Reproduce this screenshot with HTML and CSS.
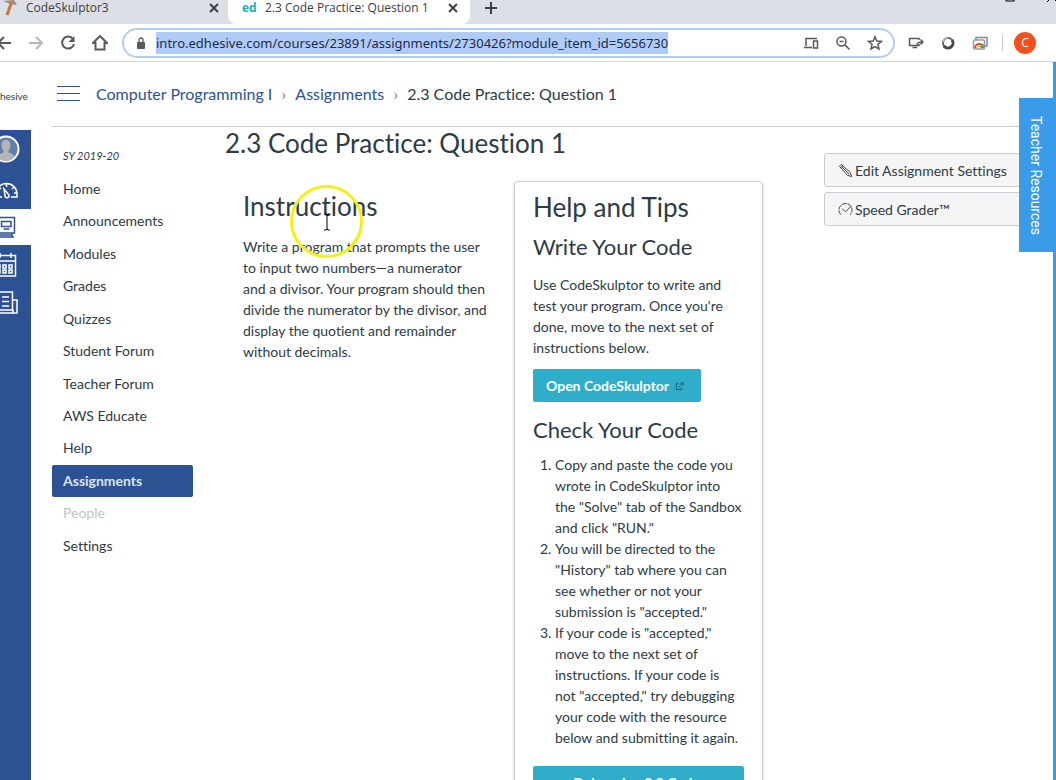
FILE: index.html
```html
<!DOCTYPE html>
<html lang="en">
<head>
    <meta charset="UTF-8">
    <meta name="viewport" content="width=device-width, initial-scale=1.0">
    <title>2.3 Code Practice: Question 1</title>
    <link rel="stylesheet" href="styles.css">
</head>
<body>
    <!-- Browser bar -->
    <div class="browser">
        <div class="tabs">
            <div class="tab">
                <svg class="favicon" viewBox="0 0 16 16"><path d="M8 4 L4 15" stroke="#c9713a" stroke-width="3"/><path d="M0 1 L11 0 L14 5 L7 4 Z" fill="#a08a7c" stroke="none"/></svg>
                <span class="tab-title">CodeSkulptor3</span>
                <button class="tab-button" aria-label="Close tab"><svg viewBox="0 0 10 10"><path d="M1 1 L9 9 M9 1 L1 9"/></svg></button>
            </div>
            <div class="tab active">
                <span class="favicon ed">ed</span>
                <span class="tab-title">2.3 Code Practice: Question 1</span>
                <button class="tab-button" aria-label="Close tab"><svg viewBox="0 0 10 10"><path d="M1 1 L9 9 M9 1 L1 9"/></svg></button>
            </div>
            <button class="tab-button new-tab" aria-label="New tab"><svg viewBox="0 0 12 12"><path d="M6 0 V12 M0 6 H12"/></svg></button>
            <div class="window-buttons">
                <svg width="10" height="10" viewBox="0 0 10 10"><rect x="1" y="1" width="8" height="8"/></svg>
                <svg width="10" height="10" viewBox="0 0 10 10"><path d="M0 0 L10 10 M10 0 L0 10"/></svg>
            </div>
        </div>
        <div class="toolbar">
            <button class="tool" aria-label="Back"><svg viewBox="0 0 16 16"><path d="M15 8 H2 M8 2 L2 8 L8 14"/></svg></button>
            <button class="tool disabled" aria-label="Forward"><svg viewBox="0 0 16 16"><path d="M1 8 H14 M8 2 L14 8 L8 14"/></svg></button>
            <button class="tool" aria-label="Reload"><svg viewBox="0 0 16 16"><path d="M13 4 A6 6 0 1 0 14 9"/><path d="M14.500 1 V7 H8.500 Z" fill="#55585c" stroke="none"/></svg></button>
            <button class="tool" aria-label="Home page"><svg viewBox="0 0 16 16"><path d="M1 8 L8 1 L15 8 H12.500 V14.500 H3.500 V8 Z"/></svg></button>
            <div class="address">
                <svg class="lock" viewBox="0 0 10 12"><rect x="1" y="5" width="8" height="7" rx="1" fill="#55585c"/><path d="M3 5 V3 A2 2 0 0 1 7 3 V5" fill="none" stroke="#55585c" stroke-width="1.300"/></svg>
                <span class="url">intro.edhesive.com/courses/23891/assignments/2730426?module_item_id=5656730</span>
                <button class="tool" aria-label="Send to your devices"><svg viewBox="0 0 16 16"><path d="M3 11 V3.500 H14 M1 12.500 H9"/><rect x="10.500" y="6" width="4" height="7"/></svg></button>
                <button class="tool" aria-label="Zoom"><svg viewBox="0 0 16 16"><circle cx="6.500" cy="6.500" r="4.500"/><path d="M10 10 L14.500 14.500 M4.500 6.500 H8.500"/></svg></button>
                <button class="tool" aria-label="Bookmark"><svg viewBox="0 0 16 16"><path d="M8 1.800 L9.800 6 L14.300 6.400 L10.900 9.400 L12 13.900 L8 11.500 L4 13.900 L5.100 9.400 L1.700 6.400 L6.200 6 Z"/></svg></button>
            </div>
            <div class="extensions">
                <button class="tool" aria-label="Cast"><svg viewBox="0 0 16 16"><path d="M11 5 V3.500 H1.500 V10.500 H11 V9 M4.500 12.500 H9 M9 9.500 C9.500 7.500 11 7 14 7 M12.500 4.500 L15 7 L12.500 9.500"/></svg></button>
                <button class="tool" aria-label="Recorder"><svg viewBox="0 0 16 16"><circle cx="8" cy="8" r="5" stroke="#606368" stroke-width="2"/><path d="M4 11 A5 5 0 0 0 12 5" stroke="#45484c" stroke-width="3"/><path d="M3 7 A5 5 0 0 1 8 3" stroke="#b5b7ba"/></svg></button>
                <button class="tool" aria-label="Gallery"><svg viewBox="0 0 16 16"><path d="M4 5 V2.500 H15 V11 H13" stroke="#888"/><rect x="1.500" y="5" width="11" height="9" rx="1" stroke="#8aa0a8"/><path d="M3 13 A4 4 0 0 1 11 13" stroke="#dd4b3e" stroke-width="2"/><path d="M5 13 A2 2 0 0 1 9 13" stroke="#e8bf35"/><path d="M9 13 L11.500 9" stroke="#48a860"/></svg></button>
            </div>
            <button class="profile" aria-label="Profile C">C</button>
        </div>
    </div>

    <div class="app">
        <!-- Global navigation -->
        <div class="rail">
            <div class="logo">hesive</div>
            <nav class="global-nav" aria-label="Global">
                <a href="#" class="account" aria-label="Account"><svg viewBox="0 0 28 28"><circle cx="14" cy="14" r="12.500" fill="#5f7eaf" stroke="#fff" stroke-width="2"/><path d="M14 5 C8 5 9 13 11.500 15.500 V17.500 C8 18.500 6 20 5.500 22.500 A12 12 0 0 0 22.500 22.500 C22 20 20 18.500 16.500 17.500 V15.500 C19 13 20 5 14 5 Z" fill="#b4b4b2" stroke="none"/></svg></a>
                <a href="#" aria-label="Dashboard"><svg viewBox="0 0 28 28"><path d="M4 21 V18 A10.500 10.500 0 0 1 25 18 V21 H19 M4 21 H10 M14.500 8 V11 M7 11 L9 13 M22 11 L20 13 M22 17 H24 M12 13 L13 20 A2 2 0 1 0 16.500 18.500 Z"/></svg></a>
                <a href="#" class="current" aria-label="Courses"><svg viewBox="0 0 28 28"><path d="M4 4.500 H22.500 V20 H4 M4 24 H22 M20 20 V24 M4 22 H20"/><path d="M9.500 8.500 H19 V13.500 H9.500 Z M11.500 16 H17.500"/></svg></a>
                <a href="#" aria-label="Calendar"><svg viewBox="0 0 28 28"><path d="M3 5.500 H23.500 V26 H3 M3 11 H23.500 M8 3 V8 M19 3 V8"/><path d="M5 15 H8 V18 H5 Z M11 15 H14 V18 H11 Z M17 15 H20 V18 H17 Z M5 20 H8 V23 H5 Z M11 20 H14 V23 H11 Z M17 20 H20 V23 H17 Z"/></svg></a>
                <a href="#" aria-label="Inbox"><svg viewBox="0 0 28 28"><path d="M7 19 V4 H20.500 V22 M4 22 V25 H25 V12 H21 M4 22 H21 V25 M10 9 H17 M10 13.500 H17 M10 18 H17"/></svg></a>
            </nav>
        </div>

        <div class="page">
            <header class="crumbs">
                <button class="menu" aria-label="Course navigation"><span></span><span></span><span></span></button>
                <a href="#">Computer Programming I</a>
                <span class="sep">›</span>
                <a href="#">Assignments</a>
                <span class="sep">›</span>
                <span>2.3 Code Practice: Question 1</span>
            </header>

            <div class="columns">
                <nav class="course-nav" aria-label="Course">
                    <p>SY 2019-20</p>
                    <div class="course-links">
                        <a href="#">Home</a>
                        <a href="#">Announcements</a>
                        <a href="#">Modules</a>
                        <a href="#">Grades</a>
                        <a href="#">Quizzes</a>
                        <a href="#">Student Forum</a>
                        <a href="#">Teacher Forum</a>
                        <a href="#">AWS Educate</a>
                        <a href="#">Help</a>
                        <a href="#" class="current">Assignments</a>
                        <a href="#" class="hidden-item">People</a>
                        <a href="#">Settings</a>
                    </div>
                </nav>

                <main class="assignment">
                    <h1>2.3 Code Practice: Question 1</h1>
                    <div class="panels">
                        <section class="instructions">
                            <h2>Instructions</h2>
                            <p>Write a program that prompts the user to input two numbers—a numerator and&nbsp;a divisor. Your program should then divide the numerator by the divisor, and display the quotient and remainder without decimals.</p>
                        </section>
                        <section class="tips">
                            <h2>Help and Tips</h2>
                            <h3>Write Your Code</h3>
                            <p>Use CodeSkulptor to write and test your program. Once you're done, move to the next set of instructions below.</p>
                            <a href="#" class="btn">Open CodeSkulptor <svg viewBox="0 0 10 10"><path d="M4 2 H1.500 V8.500 H7.500 V6 M4 6 L9 1 M6 1 H9 V4"/></svg></a>
                            <h3>Check Your Code</h3>
                            <ol>
                                <li>Copy and paste the code you wrote in CodeSkulptor into the "Solve" tab of the Sandbox and click "RUN."</li>
                                <li>You will be directed to the "History" tab where you can see whether or not your submission is "accepted."</li>
                                <li>If your code is "accepted," move to the next set of instructions. If your code is not&nbsp;"accepted," try debugging your code with the resource below and submitting it again.</li>
                            </ol>
                            <a href="#" class="btn wide">Debugging 2.3 Code</a>
                        </section>
                    </div>
                </main>

                <aside class="actions">
                    <a href="#"><svg viewBox="0 0 16 16"><path d="M1.500 3.500 L3.500 1.500 L13 10 L14.500 14.500 L10 13 Z M3 5 L5 3 M4 4 L12 12"/></svg>Edit Assignment Settings</a>
                    <a href="#"><svg viewBox="0 0 16 16"><path d="M3 13.500 A7 7 0 1 1 13 13.500" stroke-dasharray="5 1"/><path d="M4.500 7 L8 10.500 L14.500 4"/></svg>Speed Grader™</a>
                </aside>
            </div>
        </div>
    </div>

    <div class="edge"></div>
    <button class="resources">Teacher Resources</button>

    <!-- Highlighted mouse pointer -->
    <div class="pointer"><svg viewBox="0 0 8 18"><path d="M1 1 H3 L4 2 L5 1 H7 M4 2 V16 M1 17 H3 L4 16 L5 17 H7"/></svg></div>
</body>
</html>
```
FILE: styles.css
```css
* {
    box-sizing: border-box;
}
body {
    margin: 0;
    height: 100vh;
    overflow: hidden;
    display: flex;
    flex-direction: column;
    font-family: Lato, sans-serif;
    font-size: 14px;
    font-variant-ligatures: none;
    line-height: 21px;
    color: #2d3b45;
    background-color: #fff;
}
a {
    color: #2d5294;
    text-decoration: none;
}
button {
    padding: 0;
    border: none;
    background: none;
    font-family: inherit;
    cursor: pointer;
}
svg {
    fill: none;
    stroke: currentColor;
    flex: none;
}
h1, h2, h3, p {
    margin: 0;
    font-weight: 400;
}

/* browser bar */
.browser {
    flex: none;
    font-family: "Open Sans", sans-serif;
    color: #3c4043;
    border-bottom: 1px solid #d0d2d4;
}
.tabs {
    display: flex;
    height: 24px;
    background-color: #dcdfe6;
}
.tab {
    display: flex;
    align-items: center;
    width: 228px;
    padding: 0 9px 8px 3px;
    font-size: 12px;
    line-height: 16px;
}
.tab.active {
    width: 242px;
    padding: 0 12px 8px 14px;
    background-color: #fff;
    border-radius: 0 0 8px 8px;
}
.favicon {
    width: 16px;
    height: 16px;
    margin-right: 7px;
}
.ed {
    color: #28a8b8;
    font-weight: 700;
}
.tab-title {
    flex: 1;
    white-space: nowrap;
}
.tab-button {
    display: flex;
    color: #3c4043;
}
.tab-button svg {
    width: 10px;
    height: 10px;
    stroke-width: 2;
}
.new-tab {
    padding: 2px 15px;
}
.new-tab svg {
    width: 12px;
    height: 12px;
}
.window-buttons {
    display: flex;
    gap: 32px;
    height: 2px;
    margin-left: auto;
    margin-right: -1px;
    overflow: hidden;
    align-items: flex-end;
    color: #000;
}
.toolbar {
    display: flex;
    align-items: center;
    gap: 16px;
    height: 37px;
    padding-right: 20px;
}
.tool {
    display: flex;
    color: #55585c;
}
.tool svg {
    width: 16px;
    height: 16px;
    stroke-width: 2;
}
.toolbar > .tool:first-child {
    margin-left: -4px;
}
.tool.disabled {
    color: #b4b6b8;
}
.address {
    display: flex;
    flex: 1;
    align-items: center;
    gap: 16px;
    height: 30px;
    margin: 0 -3px 0 -2px;
    padding: 0 10px 0 12px;
    border: 2px solid #b4cdf2;
    border-radius: 15px;
}
.address .tool svg,
.extensions .tool svg {
    stroke-width: 1.5;
}
.lock {
    width: 10px;
    height: 12px;
    margin-right: -6px;
    stroke: none;
}
.url {
    margin-right: auto;
    font-family: "Noto Sans", sans-serif;
    font-size: 13px;
    line-height: 22px;
    color: #1b2b48;
    background-color: #b1cbf7;
    white-space: nowrap;
}
.extensions {
    display: flex;
    gap: 16px;
    padding-right: 14px;
    border-right: 1px solid #c6c8ca;
}
.profile {
    width: 22px;
    height: 22px;
    margin-left: -5px;
    border-radius: 50%;
    font-size: 12px;
    color: #fff;
    background-color: #f2501f;
}

/* left rail */
.app {
    display: flex;
    flex: 1;
    min-height: 0;
}
.rail {
    display: flex;
    flex-direction: column;
    width: 31px;
}
.logo {
    height: 68px;
    padding-top: 24px;
    font-size: 10px;
}
.global-nav {
    flex: 1;
    background-color: #2d5294;
}
.global-nav a {
    display: flex;
    align-items: center;
    height: 38px;
    color: #fff;
}
.global-nav svg {
    width: 28px;
    height: 28px;
    margin-left: -8px;
    stroke-width: 1.5;
}
.global-nav .account {
    margin-bottom: 3px;
}
.global-nav .current {
    height: 36px;
    color: #2d5294;
    background-color: #fff;
}

/* page */
.page {
    flex: 1;
    min-width: 0;
    padding-left: 21px;
}
.crumbs {
    display: flex;
    align-items: center;
    height: 65px;
    padding-bottom: 2px;
    border-bottom: 1px solid #c7cdd1;
    font-size: 16px;
}
.menu {
    display: grid;
    gap: 6px;
    width: 23px;
    margin: 0 16px 0 5px;
}
.menu span {
    height: 1px;
    background-color: #2d5294;
}
.sep {
    width: 23px;
    text-align: center;
    color: #73818c;
}
.columns {
    display: flex;
}
.course-nav {
    width: 141px;
}
.course-nav p {
    padding: 18px 11px 7px;
    font-size: 11px;
    font-style: italic;
}
.course-links {
    display: flex;
    flex-direction: column;
    height: 389px;
}
.course-nav a {
    flex: 1;
    padding-left: 11px;
    line-height: 32px;
    border-radius: 2px;
    color: #2d3b45;
}
.course-nav .current {
    font-weight: 700;
    color: #dbe3f0;
    background-color: #2d5294;
}
.course-nav .hidden-item {
    color: #bfc4c8;
}
.assignment {
    flex: 1;
    padding-left: 32px;
}
h1 {
    font-size: 26px;
    line-height: 32px;
}
.panels {
    display: grid;
    grid-template-columns: 1fr 1fr;
    gap: 22px;
    padding: 22px 0 0 18px;
}
h2 {
    font-size: 26px;
    line-height: 34px;
}
h3 {
    font-size: 22px;
    line-height: 28px;
}
.instructions {
    padding-top: 8px;
}
.instructions p {
    padding-top: 13px;
}
.tips {
    padding: 8px 18px;
    border: 1px solid #c7cdd1;
    border-radius: 4px;
    box-shadow: 0 1px 3px #c7cdd1;
}
.tips h3 {
    margin: 9px 0 10px;
}
.tips h3 + p {
    padding-top: 3px;
}
.btn {
    display: inline-block;
    margin: 11px 0 5px;
    padding: 6px 17px 6px 13px;
    border-radius: 2px;
    font-weight: 700;
    color: #fff;
    background-color: #30aec9;
}
.btn svg {
    width: 9px;
    height: 9px;
    margin-left: 3px;
    color: #17566b;
}
.btn.wide {
    display: block;
    margin-top: 18px;
    text-align: center;
}
ol {
    margin: 0;
    padding-left: 22px;
}
.actions {
    width: 232px;
    margin-left: 61px;
    padding-top: 26px;
}
.actions a {
    display: flex;
    align-items: center;
    height: 34px;
    margin-bottom: 5px;
    padding-left: 13px;
    border: 1px solid #c7cdd1;
    border-radius: 3px;
    color: #2d3b45;
    background-color: #f5f5f5;
}
.actions svg {
    width: 15px;
    height: 15px;
    margin-right: 2px;
}

/* drawer handle and pointer lie over the page */
.edge {
    position: absolute;
    top: 62px;
    right: 0;
    bottom: 0;
    width: 3px;
    background-color: #3a9be8;
}
.resources {
    position: absolute;
    top: 98px;
    right: 3px;
    height: 154px;
    width: 34px;
    writing-mode: vertical-rl;
    font-family: Roboto, sans-serif;
    font-size: 14px;
    color: #fff;
    background-color: #3a9be8;
}
.pointer {
    position: absolute;
    top: 185px;
    left: 290px;
    display: grid;
    place-items: center;
    width: 73px;
    height: 73px;
    border: 3px solid #f3f016;
    border-radius: 50%;
    pointer-events: none;
}
.pointer svg {
    width: 8px;
    height: 18px;
    color: #000;
}
```
